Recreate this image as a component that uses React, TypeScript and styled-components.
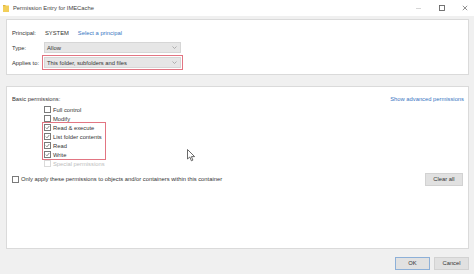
import styled, { createGlobalStyle } from 'styled-components';

const GlobalStyle = createGlobalStyle`
  html, body {
    margin: 0;
    padding: 0;
    background: #f0f0f0;
  }
  * {
    box-sizing: border-box;
  }
`;

const basicPermissions = [
  { label: 'Full control', checked: false },
  { label: 'Modify', checked: false },
];

const highlighted = ['Read & execute', 'List folder contents', 'Read', 'Write'];

const ChevronDown = () => (
  <svg width="5" height="3" viewBox="0 0 5 3">
    <path d="M0.5 0.5 L2.5 2.5 L4.5 0.5" fill="none" stroke="#a0a0a0" strokeWidth="0.8" />
  </svg>
);

const Check = () => (
  <svg width="5" height="5" viewBox="0 0 5 5">
    <path d="M0.8 2.6 L2 3.8 L4.3 1" fill="none" stroke="#6a6a6a" strokeWidth="0.8" />
  </svg>
);

const Cursor = () => (
  <svg width="9" height="13" viewBox="0 0 9 13">
    <path
      d="M0.5 0.5 L0.5 10 L2.8 8 L4.4 11.8 L5.9 11.1 L4.4 7.6 L7.6 7.6 Z"
      fill="#fff"
      stroke="#444"
      strokeWidth="0.8"
      strokeLinejoin="round"
    />
  </svg>
);

const FolderIcon = () => (
  <svg width="6" height="7" viewBox="0 0 6 7">
    <rect x="0" y="0.5" width="6" height="6.5" fill="#f2cf5a" />
    <rect x="0" y="0" width="2.5" height="1.2" fill="#e3b73c" />
  </svg>
);

const CheckBox = ({ checked = false, disabled = false }) => (
  <Box $disabled={disabled}>{checked && <Check />}</Box>
);

const App = () => {
  return (
    <Window>
      <GlobalStyle />
      <TitleBar>
        <FolderIcon />
        <TitleText>Permission Entry for IMECache</TitleText>
        <Controls>
          <Control>
            <svg width="5" height="1" viewBox="0 0 5 1">
              <rect width="5" height="0.7" fill="#c4c4c4" />
            </svg>
          </Control>
          <Control>
            <svg width="6" height="6" viewBox="0 0 6 6">
              <rect x="0.5" y="0.5" width="5" height="5" fill="none" stroke="#666" strokeWidth="0.9" />
            </svg>
          </Control>
          <Control>
            <svg width="6" height="6" viewBox="0 0 6 6">
              <path d="M0.8 0.8 L5.2 5.2 M5.2 0.8 L0.8 5.2" stroke="#777" strokeWidth="0.8" />
            </svg>
          </Control>
        </Controls>
      </TitleBar>

      <Body>
        <TopPanel>
          <FieldRow>
            <Label>Principal:</Label>
            <Value>
              SYSTEM
              <Link style={{ marginLeft: 9 }}>Select a principal</Link>
            </Value>
          </FieldRow>
          <FieldRow>
            <Label>Type:</Label>
            <Combo>
              <span>Allow</span>
              <ChevronDown />
            </Combo>
          </FieldRow>
          <FieldRow>
            <Label>Applies to:</Label>
            <Combo $highlight>
              <span>This folder, subfolders and files</span>
              <ChevronDown />
            </Combo>
          </FieldRow>
        </TopPanel>

        <PermPanel>
          <PermHeader>
            <span>Basic permissions:</span>
            <Link>Show advanced permissions</Link>
          </PermHeader>
          <CheckList>
            {basicPermissions.map((p) => (
              <CheckRow key={p.label}>
                <CheckBox checked={p.checked} />
                <span>{p.label}</span>
              </CheckRow>
            ))}
            <HighlightGroup>
              {highlighted.map((label) => (
                <CheckRow key={label}>
                  <CheckBox checked />
                  <span>{label}</span>
                </CheckRow>
              ))}
            </HighlightGroup>
            <CheckRow $disabled>
              <CheckBox disabled />
              <span>Special permissions</span>
            </CheckRow>
          </CheckList>
          <BottomRow>
            <CheckRow>
              <CheckBox />
              <span>Only apply these permissions to objects and/or containers within this container</span>
            </CheckRow>
            <Button $width={38}>Clear all</Button>
          </BottomRow>
          <CursorSpot>
            <Cursor />
          </CursorSpot>
        </PermPanel>
      </Body>

      <Footer>
        <Button $width={35} $primary>
          OK
        </Button>
        <Button $width={35}>Cancel</Button>
      </Footer>
    </Window>
  );
};

export default App;

const Window = styled.div`
  width: 474px;
  height: 274px;
  display: flex;
  flex-direction: column;
  background: #f0f0f0;
  font-family: 'Liberation Sans', Arial, sans-serif;
  font-size: 5.8px;
  color: #333;
  overflow: hidden;
`;

const TitleBar = styled.div`
  height: 16px;
  display: flex;
  align-items: center;
  padding-left: 3px;
  background: #fff;
`;

const TitleText = styled.div`
  margin-left: 4px;
  color: #444;
`;

const Controls = styled.div`
  margin-left: auto;
  margin-right: -2px;
  display: flex;
  height: 100%;
`;

const Control = styled.div`
  width: 23px;
  display: flex;
  align-items: center;
  justify-content: center;
`;

const Body = styled.div`
  display: flex;
  flex-direction: column;
  padding: 3px 5px 0 6px;
  gap: 11px;
`;

const TopPanel = styled.div`
  height: 56px;
  background: #fff;
  border: 1px solid #dadada;
  padding: 5px 0 0 5px;
  display: flex;
  flex-direction: column;
`;

const FieldRow = styled.div`
  height: 15px;
  display: flex;
  align-items: center;
`;

const Label = styled.div`
  width: 32px;
`;

const Value = styled.div`
  display: flex;
  align-items: center;
  padding-left: 1px;
`;

const Link = styled.span`
  color: #3674c2;
`;

const Combo = styled.div<{ $highlight?: boolean }>`
  width: 137px;
  height: 11px;
  display: flex;
  align-items: center;
  justify-content: space-between;
  padding: 0 3px 0 2px;
  background: #e6e6e6;
  border: 1px solid #d6d6d6;
  outline: ${(props) => (props.$highlight ? '1px solid #e27582' : 'none')};
  outline-offset: 1px;
`;

const PermPanel = styled.div`
  position: relative;
  height: 163px;
  background: #fff;
  border: 1px solid #dadada;
  padding: 7px 4px 0 5px;
  display: flex;
  flex-direction: column;
`;

const PermHeader = styled.div`
  height: 9px;
  display: flex;
  align-items: center;
  justify-content: space-between;
`;

const CheckList = styled.div`
  margin-top: 2px;
  padding-left: 32px;
  display: flex;
  flex-direction: column;
  align-items: flex-start;
`;

const HighlightGroup = styled.div`
  display: flex;
  flex-direction: column;
  margin: -1px 0 -1px -2px;
  padding: 0 3px 0 1px;
  border: 1px solid #e27582;
`;

const CheckRow = styled.div<{ $disabled?: boolean }>`
  height: 9px;
  display: flex;
  align-items: center;
  gap: 2px;
  color: ${(props) => (props.$disabled ? '#bdbdbd' : 'inherit')};
`;

const Box = styled.div<{ $disabled?: boolean }>`
  width: 7px;
  height: 7px;
  display: flex;
  align-items: center;
  justify-content: center;
  border: 1px solid ${(props) => (props.$disabled ? '#dadada' : '#7a7a7a')};
  background: #fff;
`;

const BottomRow = styled.div`
  margin-top: 5px;
  height: 12px;
  display: flex;
  align-items: center;
  justify-content: space-between;
  padding-right: 1px;
`;

const Button = styled.div<{ $width: number; $primary?: boolean }>`
  width: ${(props) => props.$width}px;
  height: 13px;
  display: flex;
  align-items: center;
  justify-content: center;
  background: #e1e1e1;
  border: 1px solid ${(props) => (props.$primary ? '#8db0d8' : '#d2d2d2')};
`;

const Footer = styled.div`
  flex: 1;
  display: flex;
  align-items: center;
  justify-content: flex-end;
  gap: 4px;
  padding: 3px 5px 0 0;
`;

const CursorSpot = styled.div`
  position: absolute;
  left: 180px;
  top: 62px;
  display: flex;
`;
